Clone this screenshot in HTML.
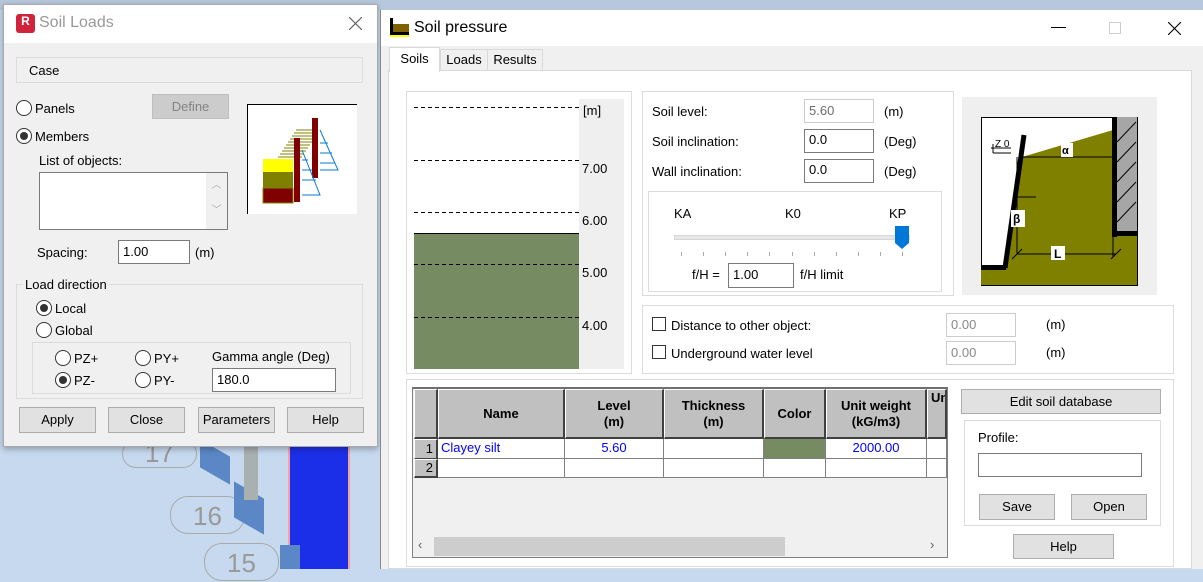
<!DOCTYPE html>
<html><head><meta charset="utf-8"><style>
*{box-sizing:border-box;margin:0;padding:0}
body{width:1203px;height:569px;overflow:hidden;position:relative;background:#c6d9ef;font-family:"Liberation Sans",sans-serif;font-size:13px;color:#000}
.a{position:absolute}
.btn{position:absolute;background:#e1e1e1;border:1px solid #adadad;text-align:center;font-size:13px}
.inp{position:absolute;background:#fff;border:1px solid #7a7a7a;font-size:13px;padding-left:4px}
.radio{position:absolute;width:16px;height:16px;border:1px solid #333;border-radius:50%;background:#fff}
.radio.on::after{content:"";position:absolute;left:3px;top:3px;width:8px;height:8px;border-radius:50%;background:#333}
.grp{position:absolute;border:1px solid #dcdcdc}
.cb{position:absolute;width:14px;height:14px;border:1px solid #333;background:#fff}
.th{position:absolute;background:#c0c0c0;border:1px solid #fff;border-right:2px solid #404040;border-bottom:2px solid #404040;font-weight:bold;font-size:13px;text-align:center;display:flex;align-items:center;justify-content:center;line-height:16px}
.td{position:absolute;background:#fff;border-right:1px solid #808080;border-bottom:1px solid #808080;font-size:13px;color:#0000ff;line-height:18px}
</style></head><body>
<!-- background CAD -->
<div class="a" style="left:0;top:0;width:1203px;height:10px;background:#b8c8dc"></div>
<div class="a" style="left:288px;top:440px;width:62px;height:129px;background:#1c2fe8;border-left:2px solid #f4a0a0;border-right:2px solid #f4a0a0"></div>
<div class="a" style="left:122px;top:440px;width:75px;height:28px;border:1px solid #aaa;border-radius:14px;color:#999;font-size:26px;text-align:center;line-height:24px">17</div>
<div class="a" style="left:170px;top:496px;width:75px;height:38px;border:1px solid #aaa;border-radius:18px;color:#999;font-size:26px;text-align:center;line-height:38px">16</div>
<div class="a" style="left:204px;top:543px;width:75px;height:38px;border:1px solid #aaa;border-radius:18px;color:#999;font-size:26px;text-align:center;line-height:38px">15</div>
<div class="a" style="left:200px;top:448px;width:30px;height:28px;background:#5b87c6;transform:skewY(30deg)"></div>
<div class="a" style="left:234px;top:490px;width:30px;height:36px;background:#5b87c6;transform:skewY(30deg)"></div>
<div class="a" style="left:244px;top:440px;width:14px;height:60px;background:#a8b0b0"></div>
<div class="a" style="left:280px;top:545px;width:20px;height:24px;background:#5b87c6"></div>

<!-- Left dialog -->
<div class="a" style="left:3px;top:4px;width:375px;height:443px;background:#f0f0f0;border:1px solid #aaa;box-shadow:0 2px 6px rgba(0,0,0,.3)">
<div class="a" style="left:0;top:0;width:373px;height:38px;background:#fff"></div>
<div class="a" style="left:12px;top:9px;width:19px;height:19px;background:#d0243c;border-radius:3px;color:#fff;font-weight:bold;font-size:12px;text-align:center;line-height:15px">R</div>
<div class="a" style="left:35px;top:9px;font-size:16px;color:#999">Soil Loads</div>
<svg class="a" style="left:345px;top:12px" width="13" height="13"><path d="M0 0L13 13M13 0L0 13" stroke="#666" stroke-width="1.2"/></svg>
</div>
<div class="grp" style="left:16px;top:57px;width:347px;height:26px"></div>
<div class="a" style="left:29px;top:63px">Case</div>
<div class="radio" style="left:16px;top:100px"></div><div class="a" style="left:35px;top:101px">Panels</div>
<div class="btn" style="left:152px;top:94px;width:77px;height:25px;background:#ccc;border-color:#bfbfbf;color:#838383;line-height:23px">Define</div>
<div class="radio on" style="left:16px;top:128px"></div><div class="a" style="left:35px;top:129px">Members</div>
<div class="a" style="left:39px;top:153px">List of objects:</div>
<div class="inp" style="left:39px;top:172px;width:189px;height:58px;border-color:#7a7a7a"></div>
<div class="a" style="left:206px;top:173px;width:21px;height:56px;background:#f0f0f0;color:#aaa;font-size:10px;text-align:center;line-height:25px">︿<br>﹀</div>
<div class="a" style="left:247px;top:104px;width:110px;height:110px;background:#fff;border-top:1px solid #000;border-left:1px solid #000">
<svg width="110" height="110">
<g stroke="#808000" stroke-width="1"><line x1="48" y1="25" x2="68" y2="25"/><line x1="46" y1="28" x2="68" y2="28"/><line x1="44" y1="31" x2="67" y2="31"/><line x1="42" y1="34" x2="66" y2="34"/><line x1="40" y1="37" x2="64" y2="37"/><line x1="38" y1="40" x2="62" y2="40"/><line x1="36" y1="43" x2="60" y2="43"/><line x1="34" y1="46" x2="58" y2="46"/><line x1="32" y1="49" x2="56" y2="49"/><line x1="30" y1="52" x2="54" y2="52"/></g>
<rect x="15" y="54" width="30" height="13" fill="#ff0"/><rect x="15" y="67" width="30" height="16" fill="#808000"/><rect x="15" y="83" width="30" height="15" fill="#800000" stroke="#808000"/>
<rect x="46" y="33" width="6" height="64" fill="#800000"/><rect x="64" y="13" width="6" height="60" fill="#800000"/>
<path d="M54 45 L72 90 L54 90 M72 25 L90 65 L72 65" fill="none" stroke="#0a7ad0" stroke-width="1"/>
<g stroke="#0a7ad0"><line x1="54" y1="55" x2="60" y2="55"/><line x1="54" y1="65" x2="64" y2="65"/><line x1="54" y1="75" x2="68" y2="75"/><line x1="72" y1="38" x2="80" y2="38"/><line x1="72" y1="48" x2="84" y2="48"/><line x1="72" y1="58" x2="87" y2="58"/></g>
</svg></div>
<div class="a" style="left:37px;top:245px">Spacing:</div>
<div class="inp" style="left:118px;top:240px;width:72px;height:24px;line-height:22px">1.00</div>
<div class="a" style="left:195px;top:245px">(m)</div>
<div class="grp" style="left:16px;top:284px;width:347px;height:115px"></div>
<div class="a" style="left:23px;top:277px;background:#f0f0f0;padding:0 2px">Load direction</div>
<div class="radio on" style="left:36px;top:300px"></div><div class="a" style="left:55px;top:301px">Local</div>
<div class="radio" style="left:36px;top:322px"></div><div class="a" style="left:55px;top:323px">Global</div>
<div class="grp" style="left:32px;top:342px;width:319px;height:52px"></div>
<div class="radio" style="left:55px;top:350px"></div><div class="a" style="left:74px;top:351px">PZ+</div>
<div class="radio" style="left:135px;top:350px"></div><div class="a" style="left:154px;top:351px">PY+</div>
<div class="a" style="left:212px;top:349px">Gamma angle (Deg)</div>
<div class="radio on" style="left:55px;top:372px"></div><div class="a" style="left:74px;top:373px">PZ-</div>
<div class="radio" style="left:135px;top:372px"></div><div class="a" style="left:154px;top:373px">PY-</div>
<div class="inp" style="left:212px;top:368px;width:124px;height:24px;line-height:22px">180.0</div>
<div class="btn" style="left:19px;top:407px;width:77px;height:26px;line-height:24px">Apply</div>
<div class="btn" style="left:108px;top:407px;width:77px;height:26px;line-height:24px">Close</div>
<div class="btn" style="left:198px;top:407px;width:77px;height:26px;line-height:24px">Parameters</div>
<div class="btn" style="left:287px;top:407px;width:77px;height:26px;line-height:24px">Help</div>

<!-- Right window -->
<div class="a" style="left:380px;top:10px;width:823px;height:559px;background:#f0f0f0;border-left:1px solid #888"></div>
<div class="a" style="left:381px;top:10px;width:822px;height:36px;background:#fff"></div>
<div class="a" style="left:390px;top:18px;width:19px;height:19px">
<svg width="19" height="19"><rect x="0" y="0" width="3" height="17" fill="#000"/><rect x="0" y="14" width="19" height="3" fill="#000"/><rect x="3" y="6" width="16" height="8" fill="#806000"/><rect x="0" y="17" width="19" height="2" fill="#ff0"/></svg></div>
<div class="a" style="left:414px;top:19px;font-size:16px">Soil pressure</div>
<div class="a" style="left:1051px;top:27px;width:15px;height:1px;background:#000"></div>
<div class="a" style="left:1109px;top:22px;width:12px;height:12px;border:1px solid #ccc"></div>
<svg class="a" style="left:1168px;top:22px" width="13" height="13"><path d="M0 0L13 13M13 0L0 13" stroke="#000" stroke-width="1.1"/></svg>
<!-- tabs -->
<div class="a" style="left:388px;top:70px;width:804px;height:499px;background:#fff;border:1px solid #d9d9d9"></div>
<div class="a" style="left:440px;top:49px;width:48px;height:22px;background:#f0f0f0;border:1px solid #d9d9d9;text-align:center;line-height:20px">Loads</div>
<div class="a" style="left:487px;top:49px;width:56px;height:22px;background:#f0f0f0;border:1px solid #d9d9d9;text-align:center;line-height:20px">Results</div>
<div class="a" style="left:389px;top:47px;width:51px;height:25px;background:#fff;border:1px solid #d9d9d9;border-bottom:none;text-align:center;line-height:22px">Soils</div>
<!-- chart -->
<div class="grp" style="left:406px;top:91px;width:226px;height:283px"></div>
<div class="a" style="left:579px;top:99px;width:45px;height:270px;background:#efefef"></div>
<div class="a" style="left:414px;top:233px;width:165px;height:136px;background:#778b62;border-top:1px solid #000"></div>
<svg class="a" style="left:414px;top:99px" width="170" height="230"><g stroke="#000" stroke-dasharray="4,3"><line x1="0" y1="8.5" x2="168" y2="8.5"/><line x1="0" y1="61.5" x2="168" y2="61.5"/><line x1="0" y1="113.5" x2="168" y2="113.5"/><line x1="0" y1="165.5" x2="168" y2="165.5"/><line x1="0" y1="218.5" x2="168" y2="218.5"/></g></svg>
<div class="a" style="left:583px;top:103px">[m]</div>
<div class="a" style="left:582px;top:161px">7.00</div>
<div class="a" style="left:582px;top:213px">6.00</div>
<div class="a" style="left:582px;top:265px">5.00</div>
<div class="a" style="left:582px;top:318px">4.00</div>
<!-- params -->
<div class="grp" style="left:642px;top:91px;width:312px;height:205px"></div>
<div class="a" style="left:652px;top:104px">Soil level:</div>
<div class="inp" style="left:804px;top:99px;width:70px;height:24px;line-height:22px;border-color:#ccc;color:#6d6d6d">5.60</div>
<div class="a" style="left:884px;top:104px">(m)</div>
<div class="a" style="left:652px;top:134px">Soil inclination:</div>
<div class="inp" style="left:804px;top:129px;width:70px;height:24px;line-height:20px">0.0</div>
<div class="a" style="left:884px;top:134px">(Deg)</div>
<div class="a" style="left:652px;top:164px">Wall inclination:</div>
<div class="inp" style="left:804px;top:159px;width:70px;height:24px;line-height:20px">0.0</div>
<div class="a" style="left:884px;top:164px">(Deg)</div>
<div class="grp" style="left:648px;top:191px;width:294px;height:101px"></div>
<div class="a" style="left:674px;top:206px">KA</div><div class="a" style="left:785px;top:206px">K0</div><div class="a" style="left:889px;top:206px">KP</div>
<div class="a" style="left:674px;top:235px;width:236px;height:5px;background:#e7e7e7;border:1px solid #d6d6d6"></div>
<svg class="a" style="left:895px;top:226px" width="15" height="24"><path d="M0 0H14V17L7 23L0 17Z" fill="#0078d7"/></svg>
<svg class="a" style="left:670px;top:252px" width="250" height="5"><g stroke="#aaa"><line x1="11.5" y1="0" x2="11.5" y2="4"/><line x1="33.5" y1="0" x2="33.5" y2="4"/><line x1="55.5" y1="0" x2="55.5" y2="4"/><line x1="77.5" y1="0" x2="77.5" y2="4"/><line x1="99.5" y1="0" x2="99.5" y2="4"/><line x1="122.5" y1="0" x2="122.5" y2="4"/><line x1="144.5" y1="0" x2="144.5" y2="4"/><line x1="166.5" y1="0" x2="166.5" y2="4"/><line x1="188.5" y1="0" x2="188.5" y2="4"/><line x1="210.5" y1="0" x2="210.5" y2="4"/><line x1="232.5" y1="0" x2="232.5" y2="4"/></g></svg>
<div class="a" style="left:692px;top:267px">f/H =</div>
<div class="inp" style="left:728px;top:263px;width:66px;height:25px;line-height:21px">1.00</div>
<div class="a" style="left:800px;top:267px">f/H limit</div>
<!-- diagram -->
<div class="a" style="left:962px;top:97px;width:195px;height:198px;background:#efefef"></div>
<svg class="a" style="left:981px;top:117px" width="157" height="169">
<rect x="0.5" y="0.5" width="156" height="168" fill="#fff" stroke="#000"/>
<path d="M41 40 L132 13 L132 112 L156 112 L156 168 L0 168 L0 152 L22 152 Z" fill="#808000"/>
<rect x="131" y="0" width="25" height="115" fill="#a6a6a6"/>
<g stroke="#000"><line x1="136" y1="25" x2="155" y2="5"/><line x1="136" y1="45" x2="155" y2="25"/><line x1="136" y1="65" x2="155" y2="45"/><line x1="136" y1="85" x2="155" y2="65"/><line x1="136" y1="105" x2="155" y2="85"/></g>
<rect x="131" y="0" width="5" height="120" fill="#000"/><rect x="131" y="114" width="25" height="5" fill="#000"/>
<path d="M43 18 L24 151" stroke="#000" stroke-width="5"/>
<rect x="0" y="148" width="25" height="5" fill="#000"/>
<g stroke="#000" fill="none"><line x1="40" y1="40" x2="132" y2="40"/><line x1="36" y1="40" x2="36" y2="137"/><line x1="36" y1="137" x2="135" y2="137"/><line x1="33" y1="80" x2="55" y2="80"/><line x1="31" y1="142" x2="41" y2="132"/><line x1="130" y1="142" x2="140" y2="132"/><line x1="132" y1="115" x2="132" y2="140"/><line x1="10" y1="31" x2="30" y2="31"/><line x1="12" y1="36" x2="30" y2="36"/><line x1="12" y1="27" x2="12" y2="36"/></g>
<rect x="80" y="26" width="12" height="14" fill="#fff"/><text x="81" y="37" font-size="11" font-weight="bold" font-family="Liberation Sans">α</text>
<rect x="30" y="93" width="14" height="17" fill="#fff"/><text x="32" y="106" font-size="12" font-weight="bold" font-family="Liberation Sans">β</text>
<rect x="70" y="129" width="14" height="14" fill="#fff"/><text x="73" y="141" font-size="12" font-weight="bold" font-family="Liberation Sans">L</text>
<text x="14" y="30" font-size="10" font-family="Liberation Sans">Z 0</text>
</svg>
<!-- options -->
<div class="grp" style="left:642px;top:305px;width:532px;height:69px"></div>
<div class="cb" style="left:652px;top:317px"></div><div class="a" style="left:671px;top:318px">Distance to other object:</div>
<div class="inp" style="left:946px;top:313px;width:70px;height:24px;line-height:22px;border-color:#ccc;color:#888">0.00</div>
<div class="a" style="left:1046px;top:317px">(m)</div>
<div class="cb" style="left:652px;top:345px"></div><div class="a" style="left:671px;top:346px">Underground water level</div>
<div class="inp" style="left:946px;top:341px;width:70px;height:24px;line-height:22px;border-color:#ccc;color:#888">0.00</div>
<div class="a" style="left:1046px;top:345px">(m)</div>
<!-- grid -->
<div class="grp" style="left:406px;top:379px;width:768px;height:188px"></div>
<div class="a" style="left:412px;top:387px;width:536px;height:171px;background:#f0f0f0;border:1px solid #808080;border-top:2px solid #707070"></div>
<div class="th" style="left:414px;top:389px;width:24px;height:50px"></div>
<div class="th" style="left:438px;top:389px;width:127px;height:50px">Name</div>
<div class="th" style="left:565px;top:389px;width:99px;height:50px">Level<br>(m)</div>
<div class="th" style="left:664px;top:389px;width:100px;height:50px">Thickness<br>(m)</div>
<div class="th" style="left:764px;top:389px;width:62px;height:50px">Color</div>
<div class="th" style="left:826px;top:389px;width:101px;height:50px">Unit weight<br>(kG/m3)</div>
<div class="th" style="left:927px;top:389px;width:20px;height:50px;justify-content:flex-start;align-items:flex-start;overflow:hidden;padding-left:3px">Un</div>
<div class="th" style="left:414px;top:439px;width:24px;height:20px;font-weight:normal;justify-content:flex-end;padding-right:3px;border-width:1px 2px 1px 1px">1</div>
<div class="th" style="left:414px;top:459px;width:24px;height:19px;font-weight:normal;justify-content:flex-end;padding-right:3px;border-width:1px 2px 2px 1px">2</div>
<div class="td" style="left:438px;top:439px;width:127px;height:20px;padding-left:3px">Clayey silt</div>
<div class="td" style="left:565px;top:439px;width:99px;height:20px;text-align:center">5.60</div>
<div class="td" style="left:664px;top:439px;width:100px;height:20px"></div>
<div class="td" style="left:764px;top:439px;width:62px;height:20px;background:#778b62"></div>
<div class="td" style="left:826px;top:439px;width:101px;height:20px;text-align:center">2000.00</div>
<div class="td" style="left:927px;top:439px;width:20px;height:20px"></div>
<div class="td" style="left:438px;top:459px;width:127px;height:19px"></div>
<div class="td" style="left:565px;top:459px;width:99px;height:19px"></div>
<div class="td" style="left:664px;top:459px;width:100px;height:19px"></div>
<div class="td" style="left:764px;top:459px;width:62px;height:19px"></div>
<div class="td" style="left:826px;top:459px;width:101px;height:19px"></div>
<div class="td" style="left:927px;top:459px;width:20px;height:19px"></div>
<div class="a" style="left:413px;top:536px;width:534px;height:21px;background:#f0f0f0"></div>
<div class="a" style="left:434px;top:537px;width:351px;height:19px;background:#cdcdcd"></div>
<div class="a" style="left:418px;top:537px;color:#606060">‹</div>
<div class="a" style="left:930px;top:537px;color:#606060">›</div>
<div class="btn" style="left:961px;top:389px;width:200px;height:25px;line-height:23px">Edit soil database</div>
<div class="grp" style="left:964px;top:420px;width:197px;height:106px"></div>
<div class="a" style="left:978px;top:430px">Profile:</div>
<div class="inp" style="left:978px;top:453px;width:164px;height:24px"></div>
<div class="btn" style="left:979px;top:494px;width:76px;height:26px;line-height:24px">Save</div>
<div class="btn" style="left:1071px;top:494px;width:76px;height:26px;line-height:24px">Open</div>
<div class="btn" style="left:1013px;top:534px;width:101px;height:25px;line-height:23px">Help</div>
</body></html>
